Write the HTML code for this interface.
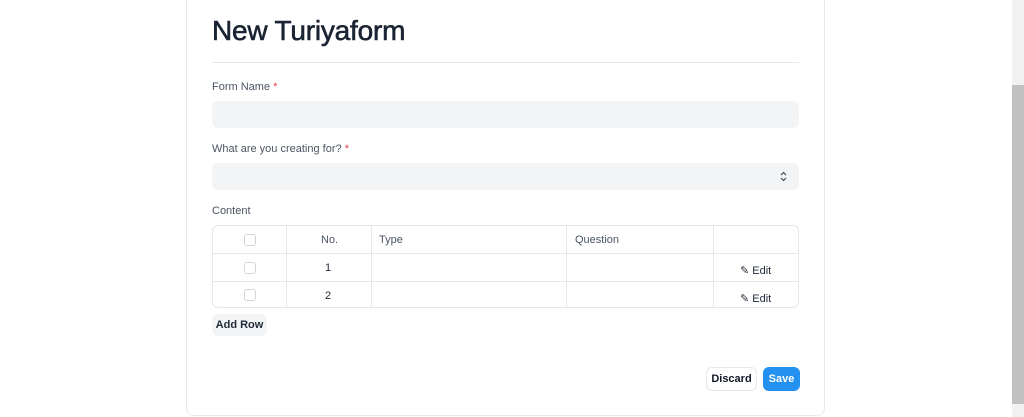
<!DOCTYPE html><html><head><style>
body{margin:0;width:1024px;height:417px;background:#fff;font-family:"Liberation Sans",sans-serif;position:relative;overflow:hidden}
.card{position:absolute;left:186px;top:-10px;width:639px;height:426px;border:1px solid #e5e7eb;border-radius:8px;box-sizing:border-box}
.abs{position:absolute}
h1{position:absolute;left:212px;top:15px;margin:0;font-size:28px;font-weight:normal;color:#1a2433;-webkit-text-stroke:0.6px #1a2433;letter-spacing:-0.2px}
.hr{left:212px;top:62px;width:587px;height:1px;background:#e5e7eb}
.lbl{font-size:11px;color:#4b5563}
.req{color:#e53e3e}
.inp{left:212px;width:587px;height:27px;background:#f3f4f6;border-radius:6px}
.tbl{left:212px;top:225px;width:587px;height:83px;border:1px solid #e5e7eb;border-radius:6px;box-sizing:border-box;font-size:11px;color:#4b5563}
.vl{position:absolute;top:0;bottom:0;width:1px;background:#e5e7eb}
.hl{position:absolute;left:0;right:0;height:1px;background:#e5e7eb}
.t{position:absolute;font-size:11px}
.cb{position:absolute;width:10px;height:10px;border:1px solid #d1d5db;border-radius:3px;left:31px}
.btn{font-size:11px;font-weight:bold;border-radius:6px;box-sizing:border-box;text-align:center}
</style></head><body>
<div class="card"></div>
<h1>New Turiyaform</h1>
<div class="abs hr"></div>
<div class="abs lbl" style="left:212px;top:81px">Form Name <span class="req">*</span></div>
<div class="abs inp" style="top:101px"></div>
<div class="abs lbl" style="left:212px;top:143px">What are you creating for? <span class="req">*</span></div>
<div class="abs inp" style="top:163px"><svg style="position:absolute;right:12px;top:8px" width="7" height="11" viewBox="0 0 7 11"><path d="M1 4L3.5 1.5L6 4M1 7L3.5 9.5L6 7" fill="none" stroke="#374151" stroke-width="1.1"/></svg></div>
<div class="abs lbl" style="left:212px;top:205px">Content</div>
<div class="abs tbl">
<div class="vl" style="left:73px"></div><div class="vl" style="left:158px"></div><div class="vl" style="left:353px"></div><div class="vl" style="left:500px"></div>
<div class="hl" style="top:27px"></div><div class="hl" style="top:55px"></div>
<div class="cb" style="top:8px"></div><div class="cb" style="top:36px"></div><div class="cb" style="top:63px"></div>
<div class="t" style="left:108px;top:8px">No.</div><div class="t" style="left:166px;top:8px">Type</div><div class="t" style="left:362px;top:8px">Question</div>
<div class="t" style="left:112px;top:36px;color:#1f2937">1</div><div class="t" style="left:112px;top:64px;color:#1f2937">2</div>
<div class="t" style="left:527px;top:38px;color:#1f2937">✎ Edit</div><div class="t" style="left:527px;top:66px;color:#1f2937">✎ Edit</div>
</div>
<div class="abs btn" style="left:212px;top:314px;width:55px;height:22px;line-height:22px;background:#f3f4f6;color:#1f2937">Add Row</div>
<div class="abs btn" style="left:706px;top:367px;width:51px;height:24px;line-height:22px;border:1px solid #e5e7eb;color:#111827">Discard</div>
<div class="abs btn" style="left:763px;top:367px;width:37px;height:24px;line-height:24px;background:#2490ef;color:#fff">Save</div>
<div class="abs" style="left:1012px;top:0;width:12px;height:417px;background:#f1f1f1"></div>
<div class="abs" style="left:1012px;top:85px;width:12px;height:319px;background:#c1c1c1"></div>
</body></html>
